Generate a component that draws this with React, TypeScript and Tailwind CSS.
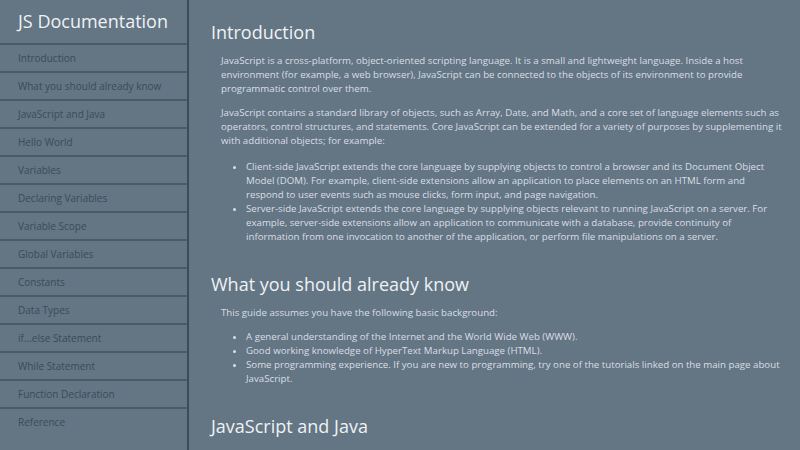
import React from 'react';

const navItems = [
  'Introduction',
  'What you should already know',
  'JavaScript and Java',
  'Hello World',
  'Variables',
  'Declaring Variables',
  'Variable Scope',
  'Global Variables',
  'Constants',
  'Data Types',
  'if...else Statement',
  'While Statement',
  'Function Declaration',
  'Reference',
];

function Section({ title, children }: { title: string; children?: React.ReactNode }) {
  return (
    <section className="mb-[28px]">
      <h2 className="text-[18px] leading-[24px] text-[#eef2f5] mb-[10px]">{title}</h2>
      {children && <div className="pl-[10px] text-[9.7px] leading-[14px] text-[#d9dfe4]">{children}</div>}
    </section>
  );
}

function App() {
  return (
    <div
      className="h-[450px] w-[800px] overflow-hidden bg-[#647584] flex"
      style={{ fontFamily: '"Open Sans", sans-serif' }}
    >
      {/* Sidebar */}
      <nav className="w-[189px] shrink-0 border-r-2 border-[#3f4c58] flex flex-col">
        <header className="h-[43px] flex items-center pl-[18px]">
          <h1 className="text-[18px] text-[#eef2f5]">JS Documentation</h1>
        </header>
        <ul>
          {navItems.map((item) => (
            <li key={item} className="h-[28px] border-t-2 border-[#4b5a67] flex items-center pl-[18px] text-[10px] text-[#3d4a57]">
              {item}
            </li>
          ))}
        </ul>
      </nav>

      {/* Main content */}
      <main className="flex-1 pl-[22px] pr-[17px] pt-[20px]">
        <Section title="Introduction">
          <p className="mb-[10px]">
            JavaScript is a cross-platform, object-oriented scripting language. It is a small and lightweight language. Inside a host environment (for example, a web browser), JavaScript can be connected to the objects of its environment to provide programmatic control over them.
          </p>
          <p className="mb-[12px]">
            JavaScript contains a standard library of objects, such as Array, Date, and Math, and a core set of language elements such as operators, control structures, and statements. Core JavaScript can be extended for a variety of purposes by supplementing it with additional objects; for example:
          </p>
          <ul className="list-disc pl-[25px]">
            <li>
              Client-side JavaScript extends the core language by supplying objects to control a browser and its Document Object Model (DOM). For example, client-side extensions allow an application to place elements on an HTML form and respond to user events such as mouse clicks, form input, and page navigation.
            </li>
            <li>
              Server-side JavaScript extends the core language by supplying objects relevant to running JavaScript on a server. For example, server-side extensions allow an application to communicate with a database, provide continuity of information from one invocation to another of the application, or perform file manipulations on a server.
            </li>
          </ul>
        </Section>

        <Section title="What you should already know">
          <p className="mb-[10px]">This guide assumes you have the following basic background:</p>
          <ul className="list-disc pl-[25px]">
            <li>A general understanding of the Internet and the World Wide Web (WWW).</li>
            <li>Good working knowledge of HyperText Markup Language (HTML).</li>
            <li>Some programming experience. If you are new to programming, try one of the tutorials linked on the main page about JavaScript.</li>
          </ul>
        </Section>

        <Section title="JavaScript and Java" />
      </main>
    </div>
  );
}

export default App;
